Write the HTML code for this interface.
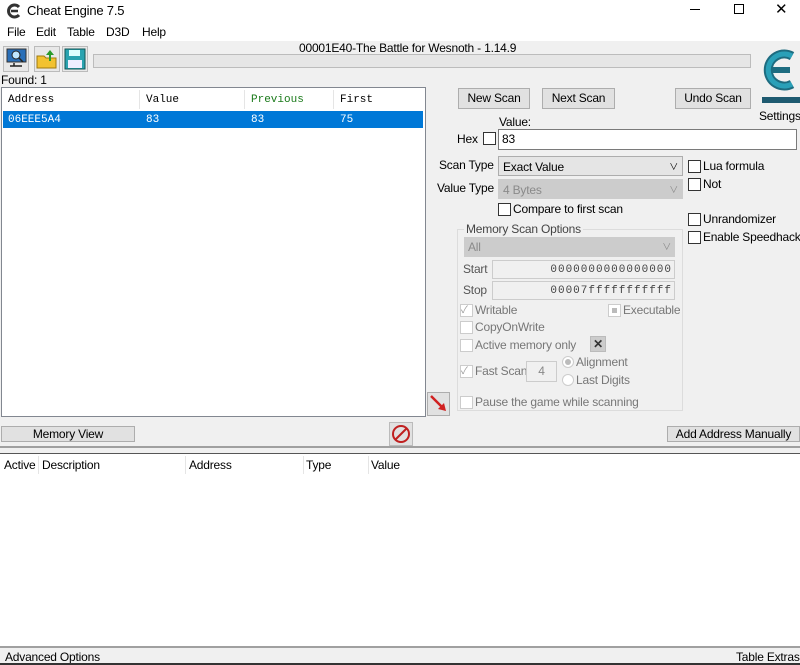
<!DOCTYPE html>
<html style="width:800px;height:665px;overflow:hidden"><head><meta charset="utf-8"><style>
*{box-sizing:border-box;margin:0;padding:0}
body{width:800px;height:665px;overflow:hidden;background:#f0f0f0;font-family:"Liberation Sans","Noto Sans CJK KR",sans-serif;font-size:12px;letter-spacing:-0.2px;color:#000;position:relative}
.a{position:absolute;white-space:nowrap}
.btn{position:absolute;background:#e1e1e1;border:1px solid #adadad;text-align:center;font-size:12px;white-space:nowrap}
.cb{position:absolute;width:13px;height:13px;border:1px solid #333;background:#fff}
.cbd{position:absolute;width:13px;height:13px;border:1px solid #ccc;background:#fff}
.g{color:#8a8a8a}
.mono{font-family:"Liberation Mono",monospace;font-size:11px;letter-spacing:0}
</style></head><body>
<div class="a" style="left:0;top:0;width:800px;height:41px;background:#fff"></div>
<svg class="a" style="left:6px;top:3px" width="16" height="16" viewBox="0 0 16 16"><path d="M13 4A6 6 0 1 0 13 12" fill="none" stroke="#333" stroke-width="3"/><path d="M5 8h7" stroke="#333" stroke-width="2.5"/></svg>
<div class="a" style="left:27px;top:3px;font-size:13px">Cheat Engine 7.5</div>
<div class="a" style="left:690px;top:9px;width:10px;height:1px;background:#000"></div>
<div class="a" style="left:734px;top:4px;width:10px;height:10px;border:1px solid #000"></div>
<div class="a" style="left:775px;top:0px;font-size:15px">✕</div>
<div class="a" style="left:7px;top:25px">File</div>
<div class="a" style="left:36px;top:25px">Edit</div>
<div class="a" style="left:67px;top:25px">Table</div>
<div class="a" style="left:106px;top:25px">D3D</div>
<div class="a" style="left:142px;top:25px">Help</div>
<div class="a" style="left:3px;top:46px;width:26px;height:26px;border:1px solid #bbb;background:#e8e8e8"></div>
<svg class="a" style="left:6px;top:48px" width="21" height="20"><rect x="1" y="1" width="19" height="13" fill="#2a6fb8" stroke="#333"/><circle cx="10" cy="7" r="4" fill="#bfe6ff" stroke="#222"/><path d="M13 10l4 4M8 15v3M4 18h12" stroke="#222" stroke-width="1.5"/></svg>
<div class="a" style="left:34px;top:46px;width:26px;height:26px;border:1px solid #bbb;background:#e8e8e8"></div>
<svg class="a" style="left:36px;top:48px" width="22" height="22"><path d="M1 8h7l2 2h10v10H1z" fill="#f2c230" stroke="#a07a10"/><path d="M14 2l-4 5h3v6h2V7h3z" fill="#2a9a2a"/></svg>
<div class="a" style="left:62px;top:46px;width:26px;height:26px;border:1px solid #bbb;background:#e8e8e8"></div>
<svg class="a" style="left:64px;top:48px" width="22" height="22"><rect x="1" y="1" width="20" height="20" fill="#2aa3b0" stroke="#155"/><rect x="5" y="2" width="11" height="6" fill="#dff"/><rect x="4" y="12" width="14" height="8" fill="#eef"/></svg>
<div class="a" style="left:299px;top:41px;font-size:12px">00001E40-The Battle for Wesnoth - 1.14.9</div>
<div class="a" style="left:93px;top:54px;width:658px;height:14px;border:1px solid #bcbcbc;background:#e6e6e6"></div>
<svg class="a" style="left:756px;top:42px" width="44" height="62" viewBox="0 0 44 62"><path d="M36 14A16 16 0 1 0 36 42" fill="none" stroke="#1e6c80" stroke-width="9"/><path d="M12 28h22" stroke="#1e6c80" stroke-width="6"/><path d="M36 14A16 16 0 1 0 36 42" fill="none" stroke="#2aa0b8" stroke-width="5"/><rect x="6" y="55" width="38" height="6" fill="#1e5a70"/></svg>
<div class="a" style="left:759px;top:109px">Settings</div>
<div class="a" style="left:1px;top:73px">Found: 1</div>
<div class="a" style="left:1px;top:87px;width:425px;height:330px;background:#fff;border:1px solid #828790"></div>
<div class="a mono" style="left:8px;top:94px">Address</div>
<div class="a" style="left:139px;top:90px;width:1px;height:19px;background:#e5e5e5"></div>
<div class="a mono" style="left:146px;top:94px">Value</div>
<div class="a" style="left:244px;top:90px;width:1px;height:19px;background:#e5e5e5"></div>
<div class="a mono" style="left:251px;top:94px;color:#1a7a1a">Previous</div>
<div class="a" style="left:333px;top:90px;width:1px;height:19px;background:#e5e5e5"></div>
<div class="a mono" style="left:340px;top:94px">First</div>
<div class="a" style="left:3px;top:111px;width:420px;height:17px;background:#0078d7"></div>
<div class="a mono" style="left:8px;top:114px;color:#fff">06EEE5A4</div>
<div class="a mono" style="left:146px;top:114px;color:#fff">83</div>
<div class="a mono" style="left:251px;top:114px;color:#fff">83</div>
<div class="a mono" style="left:340px;top:114px;color:#fff">75</div>
<div class="btn" style="left:458px;top:88px;width:72px;height:21px;line-height:19px">New Scan</div>
<div class="btn" style="left:542px;top:88px;width:73px;height:21px;line-height:19px">Next Scan</div>
<div class="btn" style="left:675px;top:88px;width:76px;height:21px;line-height:19px">Undo Scan</div>
<div class="a" style="left:499px;top:115px">Value:</div>
<div class="a" style="left:457px;top:132px">Hex</div>
<div class="cb" style="left:483px;top:132px"></div>
<div class="a" style="left:498px;top:129px;width:299px;height:21px;border:1px solid #7a7a7a;background:#fff;padding:2px 3px">83</div>
<div class="a" style="left:439px;top:158px">Scan Type</div>
<div class="a" style="left:498px;top:156px;width:185px;height:20px;border:1px solid #adadad;background:#e5e5e5;padding:3px 4px">Exact Value<span style="position:absolute;right:4px;font-size:9px">∨</span></div>
<div class="a" style="left:437px;top:181px">Value Type</div>
<div class="a g" style="left:498px;top:179px;width:185px;height:20px;border:1px solid #ccc;background:#ccc;padding:3px 4px">4 Bytes<span style="position:absolute;right:4px;font-size:9px">∨</span></div>
<div class="cb" style="left:498px;top:203px"></div>
<div class="a" style="left:513px;top:202px">Compare to first scan</div>
<div class="cb" style="left:688px;top:160px"></div><div class="a" style="left:703px;top:159px">Lua formula</div>
<div class="cb" style="left:688px;top:178px"></div><div class="a" style="left:703px;top:177px">Not</div>
<div class="cb" style="left:688px;top:213px"></div><div class="a" style="left:703px;top:212px">Unrandomizer</div>
<div class="cb" style="left:688px;top:231px"></div><div class="a" style="left:703px;top:230px">Enable Speedhack</div>
<div class="a" style="left:457px;top:229px;width:226px;height:182px;border:1px solid #dcdcdc"></div>
<div class="a" style="left:464px;top:222px;background:#f0f0f0;padding:0 2px;color:#444">Memory Scan Options</div>
<div class="a g" style="left:464px;top:237px;width:211px;height:20px;background:#ccc;padding:3px 4px">All<span style="position:absolute;right:4px;font-size:9px">∨</span></div>
<div class="a g" style="left:463px;top:262px;color:#555">Start</div>
<div class="a mono" style="left:492px;top:260px;width:183px;height:19px;border:1px solid #ccc;text-align:right;padding:3px 2px;color:#444;letter-spacing:1px">0000000000000000</div>
<div class="a g" style="left:463px;top:283px;color:#555">Stop</div>
<div class="a mono" style="left:492px;top:281px;width:183px;height:19px;border:1px solid #ccc;text-align:right;padding:3px 2px;color:#444;letter-spacing:1px">00007fffffffffff</div>
<div class="cbd" style="left:460px;top:304px;font-size:10px;line-height:11px;color:#999">✓</div><div class="a g" style="left:475px;top:303px;color:#777">Writable</div>
<div class="cbd" style="left:608px;top:304px;background:#fff"><div style="margin:3px;width:5px;height:5px;background:#bbb"></div></div><div class="a" style="left:623px;top:303px;color:#777">Executable</div>
<div class="cbd" style="left:460px;top:321px"></div><div class="a" style="left:475px;top:320px;color:#777">CopyOnWrite</div>
<div class="cbd" style="left:460px;top:339px"></div><div class="a" style="left:475px;top:338px;color:#777">Active memory only</div>
<div class="a" style="left:590px;top:336px;width:16px;height:16px;background:#ccc;border:1px solid #bbb;text-align:center;font-weight:bold;line-height:14px;color:#333">✕</div>
<div class="cbd" style="left:460px;top:365px;font-size:10px;line-height:11px;color:#999">✓</div><div class="a" style="left:475px;top:364px;color:#777">Fast Scan</div>
<div class="a" style="left:526px;top:361px;width:31px;height:21px;border:1px solid #ccc;text-align:center;line-height:19px;color:#888">4</div>
<div class="a" style="left:562px;top:356px;width:12px;height:12px;border-radius:50%;border:1px solid #ccc;background:#fff"><div style="margin:2px;width:6px;height:6px;border-radius:50%;background:#bbb"></div></div><div class="a" style="left:576px;top:355px;color:#777">Alignment</div>
<div class="a" style="left:562px;top:374px;width:12px;height:12px;border-radius:50%;border:1px solid #ccc;background:#fff"></div><div class="a" style="left:576px;top:373px;color:#777">Last Digits</div>
<div class="cbd" style="left:460px;top:396px"></div><div class="a" style="left:475px;top:395px;color:#777">Pause the game while scanning</div>
<div class="a" style="left:427px;top:392px;width:23px;height:24px;border:1px solid #adadad;background:#e1e1e1"></div>
<svg class="a" style="left:429px;top:394px" width="20" height="20"><path d="M2 2L15 15" stroke="#d02020" stroke-width="2.5"/><path d="M17 17L9 15L15 9z" fill="#d02020"/></svg>
<div class="btn" style="left:1px;top:426px;width:134px;height:16px;line-height:14px">Memory View</div>
<div class="a" style="left:389px;top:422px;width:24px;height:24px;border:1px solid #bbb;background:#e1e1e1"></div>
<svg class="a" style="left:391px;top:424px" width="20" height="20"><circle cx="10" cy="10" r="8" fill="none" stroke="#c02020" stroke-width="2"/><path d="M4.5 15.5L15.5 4.5" stroke="#c02020" stroke-width="2"/></svg>
<div class="btn" style="left:667px;top:426px;width:133px;height:16px;line-height:14px">Add Address Manually</div>
<div class="a" style="left:0;top:446px;width:800px;height:2px;background:#a0a0a0"></div>
<div class="a" style="left:0;top:453px;width:800px;height:193px;background:#fff;border-top:1px solid #555"></div>
<div class="a" style="left:4px;top:458px">Active</div>
<div class="a" style="left:38px;top:456px;width:1px;height:18px;background:#e5e5e5"></div>
<div class="a" style="left:42px;top:458px">Description</div>
<div class="a" style="left:185px;top:456px;width:1px;height:18px;background:#e5e5e5"></div>
<div class="a" style="left:189px;top:458px">Address</div>
<div class="a" style="left:303px;top:456px;width:1px;height:18px;background:#e5e5e5"></div>
<div class="a" style="left:306px;top:458px">Type</div>
<div class="a" style="left:368px;top:456px;width:1px;height:18px;background:#e5e5e5"></div>
<div class="a" style="left:371px;top:458px">Value</div>
<div class="a" style="left:0;top:646px;width:800px;height:2px;background:#a0a0a0"></div>
<div class="a" style="left:5px;top:650px">Advanced Options</div>
<div class="a" style="left:736px;top:650px">Table Extras</div>
<div class="a" style="left:0;top:663px;width:800px;height:2px;background:#333"></div>
</body></html>
